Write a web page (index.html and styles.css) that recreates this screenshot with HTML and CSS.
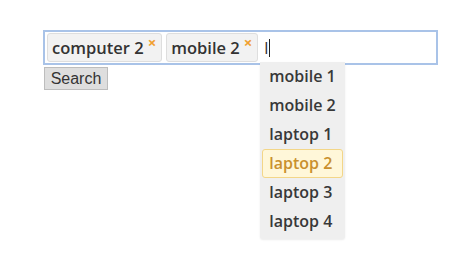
FILE: index.html
```html
<!DOCTYPE html>
<html>
<head>
<meta charset="utf-8">
<link rel="stylesheet" href="styles.css">
</head>
<body>
<div class="page">
  <div class="field">
    <div class="tokens">
      <span class="tag">computer 2<span class="x">×</span></span>
      <span class="tag">mobile 2<span class="x">×</span></span>
      <span class="entry">l<span class="caret"></span>
        <ul class="menu">
          <li>mobile 1</li>
          <li>mobile 2</li>
          <li>laptop 1</li>
          <li class="active">laptop 2</li>
          <li>laptop 3</li>
          <li>laptop 4</li>
        </ul>
      </span>
    </div>
  </div>
  <button class="search">Search</button>
</div>
</body>
</html>
```
FILE: styles.css
```css
html, body {
  margin: 0;
  background: #ffffff;
  min-height: 262px;
}
.page {
  padding: 30px 0 0 43px;
  min-height: 232px;
  display: flex;
  flex-direction: column;
  align-items: flex-start;
  gap: 2px;
}
.field {
  width: 391px;
  height: 31px;
  border: 2px solid #a9c3e8;
  background: #fff;
}
.tokens {
  display: flex;
  align-items: center;
  gap: 4px;
  padding: 1px 2px;
  height: 29px;
}
.tag {
  display: inline-flex;
  align-items: flex-start;
  height: 27px;
  line-height: 27px;
  padding: 0 5px 0 4px;
  background: #f2f2f2;
  border: 1px solid #dedede;
  border-radius: 3px;
  font-family: "Open Sans", sans-serif;
  font-weight: 600;
  font-size: 16.5px;
  color: #333;
}
.x {
  color: #f0a030;
  font-weight: 700;
  font-size: 15px;
  line-height: 15px;
  margin-left: 4px;
  margin-top: 1px;
}
.entry {
  position: relative;
  margin-left: 2px;
  font-family: "Open Sans", sans-serif;
  font-size: 16.5px;
  color: #333;
  line-height: 27px;
  display: inline-flex;
  align-items: center;
}
.caret {
  display: inline-block;
  width: 1px;
  height: 18px;
  background: #222;
  margin-left: 1px;
}
.menu {
  position: absolute;
  left: -4px;
  top: 28px;
  width: 85px;
  margin: 0;
  padding: 0 0 3px 0;
  list-style: none;
  background: #efefef;
  border-radius: 0 0 3px 3px;
  box-shadow: 0 1px 2px rgba(0,0,0,0.08);
  z-index: 2;
}
.menu li {
  height: 29px;
  line-height: 29px;
  padding-left: 9px;
  font-family: "Open Sans", sans-serif;
  font-weight: 600;
  font-size: 16px;
  color: #383838;
  white-space: nowrap;
}
.menu li.active {
  margin: 0 2px;
  padding-left: 6px;
  height: 27px;
  line-height: 27px;
  background: #fff7d9;
  border: 1px solid #f3d688;
  border-radius: 3px;
  color: #c9902e;
}
.search {
  margin: 0 0 0 1px;
  width: 64px;
  height: 23px;
  padding: 0;
  background: #dedede;
  border: 1px solid #bdbdbd;
  border-radius: 0;
  font-family: "Liberation Sans", Arial, sans-serif;
  font-size: 16px;
  color: #333;
}
```
